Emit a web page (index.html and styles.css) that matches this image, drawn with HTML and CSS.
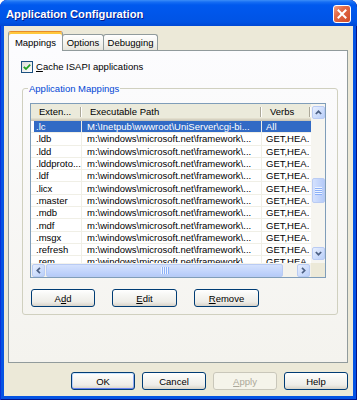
FILE: index.html
```html
<!DOCTYPE html>
<html>
<head>
<meta charset="utf-8">
<link rel="stylesheet" href="styles.css">
</head>
<body>
<div class="window">
  <div class="titlebar">
    <span class="title">Application Configuration</span>
    <span class="close"><svg width="10" height="10" viewBox="0 0 10 10"><path d="M1.5 1.5 L8.5 8.5 M8.5 1.5 L1.5 8.5" stroke="#fff" stroke-width="2" stroke-linecap="square"/></svg></span>
  </div>
  <div class="client">
    <div class="tabs">
      <div class="tab active">Mappings</div>
      <div class="tab t-options">Options</div>
      <div class="tab t-debug">Debugging</div>
    </div>
    <div class="panel">
      <div class="check-row">
        <span class="checkbox"><svg width="8" height="8" viewBox="0 0 8 8"><path d="M0.8 3.8 L3 6 L7.2 1.6" fill="none" stroke="#21A121" stroke-width="1.8"/></svg></span>
        <span><u>C</u>ache ISAPI applications</span>
      </div>
      <fieldset class="group">
        <legend>Application Mappings</legend>
        <div class="listview">
          <div class="lv-main">
            <div class="lv-header">
              <div class="hcell">Exten...</div>
              <div class="hcell">Executable Path</div>
              <div class="hcell">Verbs</div>
            </div>
            <div class="lv-rows">
              <div class="lv-row sel"><div class="cell">.lc</div><div class="cell">M:\Inetpub\wwwroot\UniServer\cgi-bi...</div><div class="cell">All</div></div>
              <div class="lv-row"><div class="cell">.ldb</div><div class="cell">m:\windows\microsoft.net\framework\...</div><div class="cell">GET,HEA.</div></div>
              <div class="lv-row"><div class="cell">.ldd</div><div class="cell">m:\windows\microsoft.net\framework\...</div><div class="cell">GET,HEA.</div></div>
              <div class="lv-row"><div class="cell">.lddproto...</div><div class="cell">m:\windows\microsoft.net\framework\...</div><div class="cell">GET,HEA.</div></div>
              <div class="lv-row"><div class="cell">.ldf</div><div class="cell">m:\windows\microsoft.net\framework\...</div><div class="cell">GET,HEA.</div></div>
              <div class="lv-row"><div class="cell">.licx</div><div class="cell">m:\windows\microsoft.net\framework\...</div><div class="cell">GET,HEA.</div></div>
              <div class="lv-row"><div class="cell">.master</div><div class="cell">m:\windows\microsoft.net\framework\...</div><div class="cell">GET,HEA.</div></div>
              <div class="lv-row"><div class="cell">.mdb</div><div class="cell">m:\windows\microsoft.net\framework\...</div><div class="cell">GET,HEA.</div></div>
              <div class="lv-row"><div class="cell">.mdf</div><div class="cell">m:\windows\microsoft.net\framework\...</div><div class="cell">GET,HEA.</div></div>
              <div class="lv-row"><div class="cell">.msgx</div><div class="cell">m:\windows\microsoft.net\framework\...</div><div class="cell">GET,HEA.</div></div>
              <div class="lv-row"><div class="cell">.refresh</div><div class="cell">m:\windows\microsoft.net\framework\...</div><div class="cell">GET,HEA.</div></div>
              <div class="lv-row"><div class="cell">.rem</div><div class="cell">m:\windows\microsoft.net\framework\...</div><div class="cell">GET,HEA.</div></div>
            </div>
          </div>
          <div class="vscroll">
            <span class="sb-btn"><svg width="7" height="5" viewBox="0 0 7 5"><path d="M0.8 4 L3.5 1.3 L6.2 4" fill="none" stroke="#4D6185" stroke-width="1.7"/></svg></span>
            <span class="vthumb"><svg width="7" height="8" viewBox="0 0 7 8"><path d="M0 0.5H7M0 2.5H7M0 4.5H7M0 6.5H7" stroke="#EEF4FE" stroke-width="1"/><path d="M0 1.5H7M0 3.5H7M0 5.5H7M0 7.5H7" stroke="#8CB0F8" stroke-width="1"/></svg></span>
            <span class="vspacer"></span>
            <span class="sb-btn"><svg width="7" height="5" viewBox="0 0 7 5"><path d="M0.8 1 L3.5 3.7 L6.2 1" fill="none" stroke="#4D6185" stroke-width="1.7"/></svg></span>
          </div>
          <div class="hscroll">
            <span class="sb-btn"><svg width="5" height="7" viewBox="0 0 5 7"><path d="M4 0.8 L1.3 3.5 L4 6.2" fill="none" stroke="#4D6185" stroke-width="1.7"/></svg></span>
            <span class="hthumb"><svg width="8" height="7" viewBox="0 0 8 7"><path d="M0.5 0V7M2.5 0V7M4.5 0V7M6.5 0V7" stroke="#EEF4FE" stroke-width="1"/><path d="M1.5 0V7M3.5 0V7M5.5 0V7M7.5 0V7" stroke="#8CB0F8" stroke-width="1"/></svg></span>
            <span class="hspacer"></span>
            <span class="sb-btn"><svg width="5" height="7" viewBox="0 0 5 7"><path d="M1 0.8 L3.7 3.5 L1 6.2" fill="none" stroke="#4D6185" stroke-width="1.7"/></svg></span>
          </div>
          <div class="corner"></div>
        </div>
        <div class="group-buttons">
          <button class="btn">A<u>d</u>d</button>
          <button class="btn w65"><u>E</u>dit</button>
          <button class="btn w65"><u>R</u>emove</button>
        </div>
      </fieldset>
    </div>
    <div class="dialog-buttons">
      <button class="btn default">OK</button>
      <button class="btn">Cancel</button>
      <button class="btn disabled"><u>A</u>pply</button>
      <button class="btn">Help</button>
    </div>
  </div>
</div>
</body>
</html>
```

FILE: styles.css
```css
html, body {
  margin: 0;
  padding: 0;
  background: #ffffff;
}
body {
  font-family: "Liberation Sans", Arial, sans-serif;
  font-size: 9.5px;
  color: #000;
}
.window {
  width: 357px;
  height: 400px;
  display: flex;
  flex-direction: column;
  background: #0553E3;
  border-radius: 7px 7px 0 0;
  overflow: hidden;
  box-shadow: inset 1px 0 #0831D9, inset -1px 0 #00138C, inset 0 -1px #00138C;
}
.titlebar {
  height: 26px;
  flex: none;
  display: flex;
  align-items: center;
  justify-content: space-between;
  padding: 0 6px 0 6px;
  background: linear-gradient(#3C8EF8 0, #166EF4 2px, #0059EE 5px, #0056EA 50%, #0053E4 85%, #0048D4 100%);
  border-radius: 7px 7px 0 0;
}
.title {
  color: #fff;
  font-weight: bold;
  font-size: 11.2px;
  text-shadow: 1px 1px 0 #0A1E8C;
  margin-top: 1px;
}
.close {
  width: 18px;
  height: 18px;
  box-sizing: border-box;
  border: 1px solid #fff;
  border-radius: 3px;
  background: linear-gradient(135deg, #F2A184 0%, #E36B48 35%, #CF4A27 100%);
  display: flex;
  align-items: center;
  justify-content: center;
  margin-top: 1px;
}
.client {
  flex: 1;
  margin: 0 4px 4px;
  background: #ECE9D8;
  padding: 5px 5px 6px 4px;
  display: flex;
  flex-direction: column;
}
.tabs {
  display: flex;
  align-items: flex-end;
  height: 19px;
  flex: none;
}
.tab {
  box-sizing: border-box;
  height: 16px;
  border: 1px solid #919B9C;
  border-bottom: none;
  border-radius: 3px 3px 0 0;
  background: linear-gradient(#FFFFFF, #F3F2EC 60%, #E6E4DA);
  display: flex;
  align-items: center;
  justify-content: center;
  margin-left: -1px;
}
.tab.active {
  width: 55px;
  height: 20px;
  margin-left: 0;
  margin-bottom: -1px;
  position: relative;
  z-index: 1;
  background: #FCFCFE;
  border-top: 1px solid #E68B2C;
  box-shadow: inset 0 2px 0 #FFC83C;
  padding-top: 2px;
}
.t-options { width: 42px; }
.t-debug { width: 55px; }
.panel {
  height: 313px;
  flex: none;
  box-sizing: border-box;
  border: 1px solid #919B9C;
  background: linear-gradient(#FCFCFE, #F4F3EE);
  padding: 9px 0 0 12px;
}
.check-row {
  display: flex;
  align-items: center;
  gap: 3px;
  height: 13px;
}
.checkbox {
  width: 12px;
  height: 12px;
  box-sizing: border-box;
  border: 1px solid #1C5180;
  background: linear-gradient(135deg, #DCDCD7, #FFFFFF);
  display: flex;
  align-items: center;
  justify-content: center;
}
.group {
  margin: 10px 0 0 1px;
  width: 316px;
  box-sizing: border-box;
  border: 1px solid #D0D0BF;
  border-radius: 3px;
  padding: 9px 10px 7px 7px;
  min-width: 0;
}
.group legend {
  color: #0046D5;
  padding: 0 1px;
  margin-left: -2px;
  line-height: 11px;
}
.listview {
  width: 296px;
  height: 175px;
  box-sizing: border-box;
  border: 1px solid #7F9DB9;
  background: #fff;
  display: grid;
  grid-template-columns: 280px 14px;
  grid-template-rows: 159px 14px;
}
.lv-main {
  overflow: hidden;
  display: flex;
  flex-direction: column;
  min-width: 0;
}
.lv-header {
  display: grid;
  grid-template-columns: 51px 180px 49px;
  height: 17px;
  flex: none;
  background: linear-gradient(#EBEADB 0, #EBEADB 14px, #E2DECD 14px, #E2DECD 15px, #D6D2C2 15px, #D6D2C2 16px, #CBC7B8 16px);
}
.hcell {
  padding-left: 8px;
  display: flex;
  align-items: center;
  padding-bottom: 2px;
  white-space: nowrap;
  background:
    linear-gradient(#ACA899, #ACA899) right 1px top 3px / 1px 10px no-repeat,
    linear-gradient(#FFFFFF, #FFFFFF) right 0 top 3px / 1px 10px no-repeat;
}
.lv-rows {
  flex: 1;
  overflow: hidden;
}
.lv-row {
  display: grid;
  grid-template-columns: 51px 180px 49px;
  height: 12.3px;
}
.cell {
  padding-left: 5px;
  white-space: nowrap;
  box-sizing: border-box;
  border-right: 1px solid #F0EFE6;
  border-bottom: 1px solid #F0EFE6;
  display: flex;
  align-items: center;
}
.cell:last-child {
  padding-left: 4px;
  border-right: none;
}
.lv-row.sel .cell {
  background: #316AC5;
  color: #fff;
}
.lv-row.sel .cell:first-child {
  background: linear-gradient(#316AC5, #316AC5) no-repeat 3px 0 / calc(100% - 3px) 100%;
}
.vscroll {
  grid-column: 2;
  grid-row: 1;
  background: #F6F5F0;
  display: flex;
  flex-direction: column;
  padding: 2px 0 3px 1px;
  box-sizing: border-box;
}
.sb-btn {
  width: 13px;
  height: 13px;
  flex: none;
  box-sizing: border-box;
  border: 1px solid #B9CBF3;
  border-radius: 2px;
  background: linear-gradient(135deg, #E8EFFE, #B9CFF9);
  display: flex;
  align-items: center;
  justify-content: center;
}
.vthumb {
  width: 13px;
  height: 25px;
  margin-top: 59px;
  flex: none;
  box-sizing: border-box;
  border: 1px solid #B9CBF3;
  border-radius: 2px;
  background: linear-gradient(90deg, #D4E1FD, #C2D4FB 60%, #B5CBF8);
  display: flex;
  align-items: center;
  justify-content: center;
}
.vspacer { flex: 1; }
.hscroll {
  grid-column: 1;
  grid-row: 2;
  background: #F3F2EC;
  display: flex;
  align-items: flex-start;
  padding: 1px 1px 0 1px;
}
.hthumb {
  width: 237px;
  height: 13px;
  margin-left: 1px;
  flex: none;
  box-sizing: border-box;
  border: 1px solid #B9CBF3;
  border-radius: 2px;
  background: linear-gradient(#D4E1FD, #C2D4FB 60%, #B5CBF8);
  display: flex;
  align-items: center;
  justify-content: center;
}
.hspacer { flex: 1; }
.corner {
  grid-column: 2;
  grid-row: 2;
  background: #ECE9D8;
}
.group-buttons {
  display: flex;
  gap: 17px;
  margin: 11px 0 0 1px;
}
.btn {
  width: 64px;
  height: 18px;
  box-sizing: border-box;
  border: 1px solid #003C74;
  border-radius: 3px;
  background: linear-gradient(#FFFFFF 0%, #F7F7F4 30%, #EEEDE8 75%, #D8D3C8 100%);
  font-family: inherit;
  font-size: inherit;
  color: #000;
  padding: 0;
  display: flex;
  align-items: center;
  justify-content: center;
}
.btn.w65 { width: 65px; }
.btn.default {
  box-shadow: inset 0 1px #CEE7FF, inset 0 -1px #6982EE, inset 1px 0 #B8D0FA, inset -1px 0 #8FA8F0;
}
.btn.disabled {
  border-color: #C9C7BA;
  background: #F5F4EA;
  color: #ACA899;
}
.dialog-buttons {
  display: flex;
  justify-content: flex-end;
  gap: 7px;
  margin-top: 9px;
}
```
